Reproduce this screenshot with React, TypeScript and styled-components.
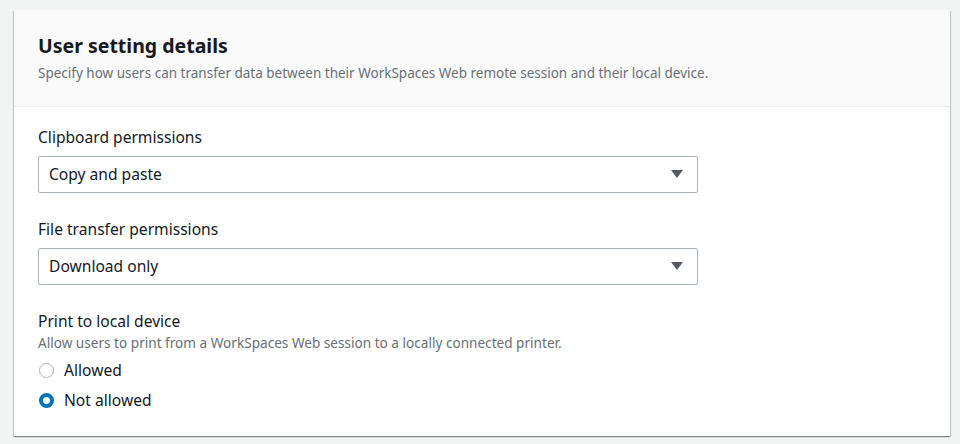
import styled, { createGlobalStyle } from "styled-components";

const GlobalStyle = createGlobalStyle`
  body {
    margin: 0;
    background: #f2f3f3;
    font-family: "Noto Sans", "Open Sans", sans-serif;
    color: #16191f;
  }
`;

const Page = styled.div`
  padding: 10px 10px 8px 14px;
`;

const Card = styled.div`
  width: 936px;
  background: #ffffff;
  box-shadow: 0 1px 1px 0 rgba(0, 28, 36, 0.3), 1px 1px 1px 0 rgba(0, 28, 36, 0.15),
    -1px 1px 1px 0 rgba(0, 28, 36, 0.15);
`;

const Header = styled.div`
  background: #fafafa;
  border-bottom: 1px solid #eaeded;
  padding: 25px 24px 24px;
`;

const Title = styled.h2`
  margin: 0;
  font-size: 19.5px;
  line-height: 22px;
  font-weight: 700;
  color: #16191f;
`;

const Description = styled.div`
  margin-top: 7px;
  font-size: 13.5px;
  line-height: 18px;
  color: #687078;
`;

const Body = styled.div`
  display: flex;
  flex-direction: column;
  gap: 26px;
  padding: 20px 24px 21px;
`;

const Field = styled.div`
  display: flex;
  flex-direction: column;
`;

const Label = styled.div<{ $tight?: boolean }>`
  font-size: 15.6px;
  line-height: 20px;
  margin-bottom: ${(p) => (p.$tight ? "4px" : "9px")};
`;

const Hint = styled.div`
  font-size: 13.6px;
  line-height: 16px;
  color: #687078;
`;

const Select = styled.div`
  box-sizing: border-box;
  width: 660px;
  height: 37px;
  display: flex;
  align-items: center;
  justify-content: space-between;
  padding: 0 14px 2px 10px;
  border: 1px solid #aab7b8;
  border-radius: 2px;
  background: #ffffff;
`;

const SelectValue = styled.span`
  font-size: 15.6px;
  line-height: 20px;
  color: #16191f;
`;

const RadioGroup = styled.div`
  display: flex;
  flex-direction: column;
  margin-top: 4px;
`;

const RadioRow = styled.label`
  display: flex;
  align-items: center;
  gap: 10px;
  height: 30px;
  font-size: 15.6px;
  line-height: 20px;
  color: #16191f;
`;

const Radio = styled.span<{ $checked: boolean }>`
  box-sizing: border-box;
  width: 15px;
  height: 15px;
  margin-left: 1px;
  border-radius: 50%;
  background: #ffffff;
  border: ${(p) => (p.$checked ? "4.5px solid #0073bb" : "1.5px solid #aab7b8")};
`;

const Caret = () => (
  <svg width="12" height="8" viewBox="0 0 12 8">
    <path d="M0 0 H12 L6 8 Z" fill="#545b64" />
  </svg>
);

const SelectField = ({ value }: { value: string }) => (
  <Select>
    <SelectValue>{value}</SelectValue>
    <Caret />
  </Select>
);

const printOptions = [
  { label: "Allowed", checked: false },
  { label: "Not allowed", checked: true }
];

const App = () => {
  return (
    <>
      <GlobalStyle />
      <Page>
        <Card>
          <Header>
            <Title>User setting details</Title>
            <Description>
              Specify how users can transfer data between their WorkSpaces Web remote session and
              their local device.
            </Description>
          </Header>
          <Body>
            <Field>
              <Label>Clipboard permissions</Label>
              <SelectField value="Copy and paste" />
            </Field>
            <Field>
              <Label>File transfer permissions</Label>
              <SelectField value="Download only" />
            </Field>
            <Field>
              <Label $tight>Print to local device</Label>
              <Hint>Allow users to print from a WorkSpaces Web session to a locally connected printer.</Hint>
              <RadioGroup>
                {printOptions.map((opt) => (
                  <RadioRow key={opt.label}>
                    <Radio $checked={opt.checked} />
                    {opt.label}
                  </RadioRow>
                ))}
              </RadioGroup>
            </Field>
          </Body>
        </Card>
      </Page>
    </>
  );
};

export default App;
